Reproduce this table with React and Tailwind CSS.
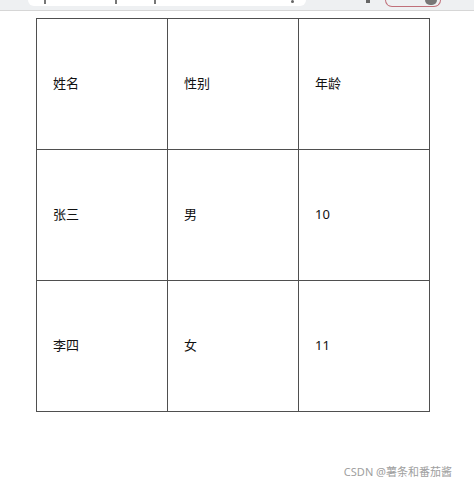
export default function App() {
  const rows = [
    ["姓名", "性别", "年龄"],
    ["张三", "男", "10"],
    ["李四", "女", "11"],
  ];
  return (
    <div
      className="w-[474px] h-[485px] bg-white flex flex-col overflow-hidden"
      style={{ fontFamily: '"Segoe UI", "Noto Sans", "Noto Sans CJK SC", sans-serif' }}
    >
      <div className="h-[11px] shrink-0 bg-[#eef0f2] border-b border-[#d6d6d6] flex items-start pl-[28px]">
        <div className="w-[278px] h-[6px] bg-white rounded-b-[8px] flex items-start pl-[16px] gap-[69px]">
          <div className="w-[2px] h-[4px] bg-[#777]"></div>
          <div className="w-[2px] h-[4px] bg-[#777]"></div>
          <div className="w-[2px] h-[4px] bg-[#777] -ml-[32px]"></div>
          <div className="w-[3px] h-[3px] bg-[#666] rounded-full ml-[66px]"></div>
        </div>
        <div className="w-[4px] h-[3px] bg-[#666] ml-[60px]"></div>
        <div className="ml-[15px] w-[56px] h-[7px] border border-t-0 border-[#c0707a] rounded-b-[9px] flex justify-end items-start pr-[3px]">
          <div className="w-[12px] h-[5px] bg-[#777] rounded-b-full"></div>
        </div>
      </div>
      <div className="pl-[36px] pt-[7px]">
        <table className="border-collapse">
          <tbody>
            {rows.map((r, i) => (
              <tr key={i}>
                {r.map((c, j) => (
                  <td
                    key={j}
                    className="border border-[#4f4f4f] w-[131px] h-[131px] pl-[16px] text-[13px] text-[#111] align-middle"
                  >
                    {c}
                  </td>
                ))}
              </tr>
            ))}
          </tbody>
        </table>
      </div>
      <div
        className="flex justify-end pr-[22px] pt-[52px] text-[11px] text-[#a0a0a0]"
        style={{ fontFamily: '"Noto Sans", "Noto Sans CJK SC", sans-serif' }}
      >
        CSDN @薯条和番茄酱
      </div>
    </div>
  );
}
